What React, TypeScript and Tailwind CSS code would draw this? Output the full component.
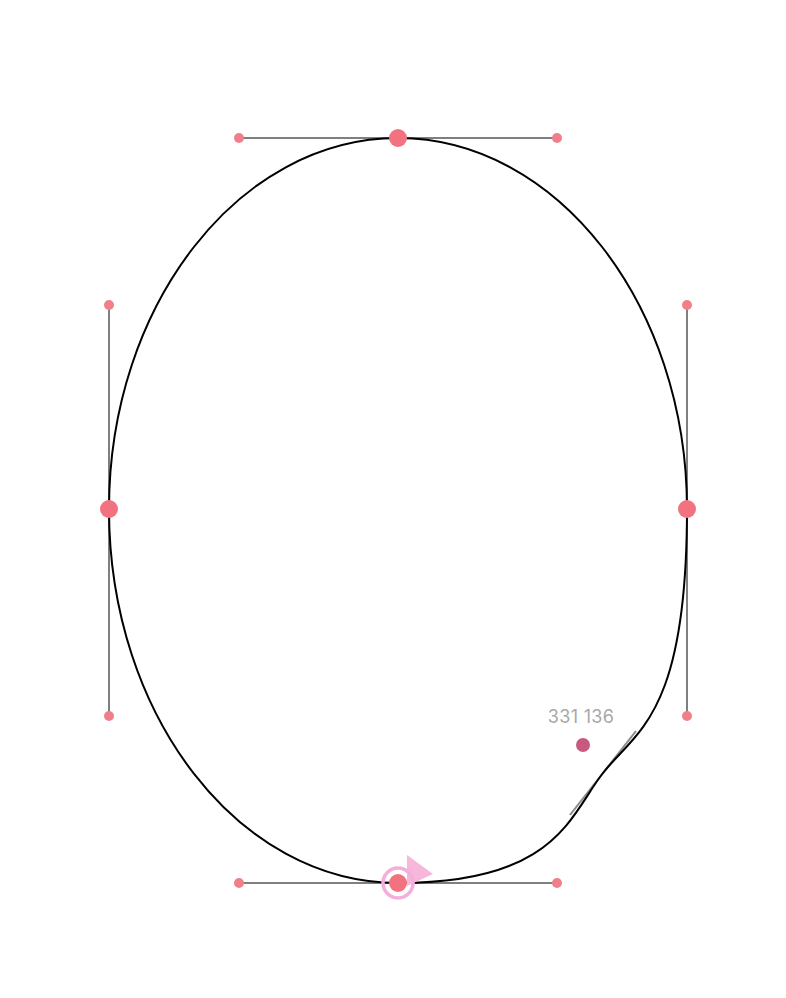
import React from "react";

const anchors: [number, number][] = [
  [398, 138],
  [687, 509],
  [398, 883],
  [109, 509],
];

const handles: [number, number, number, number][] = [
  [239, 138, 557, 138],
  [687, 305, 687, 716],
  [239, 883, 557, 883],
  [109, 305, 109, 716],
];

const PATH =
  "M398 138 C557 138 687 305 687 509 C687 716 636 731 603 773 C570 815 557 883 398 883 C239 883 109 716 109 509 C109 305 239 138 398 138 Z";

export default function App() {
  return (
    <div className="h-[998px] w-[786px] bg-white">
      <svg width="786" height="998" viewBox="0 0 786 998" className="block">
        {handles.map(([x1, y1, x2, y2], i) => (
          <line key={i} x1={x1} y1={y1} x2={x2} y2={y2} stroke="#7f7f7f" strokeWidth={2} />
        ))}
        <line x1={570} y1={815} x2={636} y2={731} stroke="#8a8a8a" strokeWidth={2} />
        <path d={PATH} fill="none" stroke="#000" strokeWidth={2} />
        {handles.map(([x1, y1, x2, y2], i) => (
          <g key={i} fill="#f17f8a">
            <circle cx={x1} cy={y1} r={5} />
            <circle cx={x2} cy={y2} r={5} />
          </g>
        ))}
        <polygon points="407,855 433,874 407,886" fill="#f7b6dc" />
        <circle cx={398} cy={883} r={15} fill="none" stroke="#f5aedb" strokeWidth={3.5} />
        {anchors.map(([x, y], i) => (
          <circle key={i} cx={x} cy={y} r={9} fill="#f2737f" />
        ))}
        <circle cx={583} cy={745} r={7} fill="#c85a80" />
        <text
          x={581}
          y={723}
          textAnchor="middle"
          fontSize={18}
          fill="#a8a8a8"
          style={{ fontFamily: "Inter, 'Liberation Sans', sans-serif", letterSpacing: "0.3px" }}
        >
          331 136
        </text>
      </svg>
    </div>
  );
}
